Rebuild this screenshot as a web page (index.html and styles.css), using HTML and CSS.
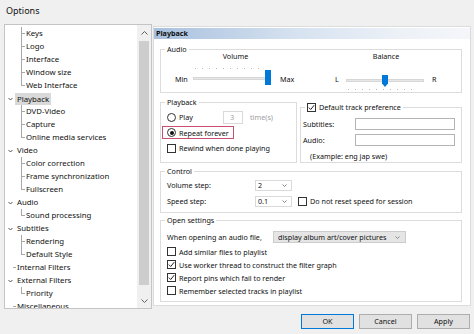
FILE: index.html
```html
<!DOCTYPE html>
<html lang="en">
<head>
    <meta charset="UTF-8">
    <title>Options</title>
    <link rel="stylesheet" href="styles.css">
</head>
<body>

<div class="title">Options</div>

<div class="main">
    <div class="tree">
        <div class="tree-list">
            <div class="branch">
                <div class="leaf">Keys</div>
                <div class="leaf">Logo</div>
                <div class="leaf">Interface</div>
                <div class="leaf">Window size</div>
                <div class="leaf">Web Interface</div>
            </div>
            <div class="node selected"><svg class="chev" width="5" height="4" viewBox="0 0 5 4"><path d="M0.5 1 L2.5 3 L4.5 1"/></svg><span>Playback</span></div>
            <div class="branch">
                <div class="leaf">DVD-Video</div>
                <div class="leaf">Capture</div>
                <div class="leaf">Online media services</div>
            </div>
            <div class="node"><svg class="chev" width="5" height="4" viewBox="0 0 5 4"><path d="M0.5 1 L2.5 3 L4.5 1"/></svg><span>Video</span></div>
            <div class="branch">
                <div class="leaf">Color correction</div>
                <div class="leaf">Frame synchronization</div>
                <div class="leaf">Fullscreen</div>
            </div>
            <div class="node"><svg class="chev" width="5" height="4" viewBox="0 0 5 4"><path d="M0.5 1 L2.5 3 L4.5 1"/></svg><span>Audio</span></div>
            <div class="branch">
                <div class="leaf">Sound processing</div>
            </div>
            <div class="node"><svg class="chev" width="5" height="4" viewBox="0 0 5 4"><path d="M0.5 1 L2.5 3 L4.5 1"/></svg><span>Subtitles</span></div>
            <div class="branch">
                <div class="leaf">Rendering</div>
                <div class="leaf">Default Style</div>
            </div>
            <div class="node root-leaf"><span>Internal Filters</span></div>
            <div class="node"><svg class="chev" width="5" height="4" viewBox="0 0 5 4"><path d="M0.5 1 L2.5 3 L4.5 1"/></svg><span>External Filters</span></div>
            <div class="branch">
                <div class="leaf">Priority</div>
            </div>
            <div class="node root-leaf"><span>Miscellaneous</span></div>
        </div>
        <div class="scrollbar">
            <div class="sb-arrow"><svg width="7" height="4" viewBox="0 0 7 4"><path d="M0.5 3.5 L3.5 0.5 L6.5 3.5"/></svg></div>
            <div class="sb-thumb"></div>
            <div class="sb-space"></div>
            <div class="sb-arrow"><svg width="7" height="4" viewBox="0 0 7 4"><path d="M0.5 0.5 L3.5 3.5 L6.5 0.5"/></svg></div>
        </div>
    </div>

    <div class="panel">
        <div class="panel-head">Playback</div>

        <div class="group audio">
            <div class="group-title">Audio</div>
            <div class="sliders">
                <div class="slider-block">
                    <div class="slider-caption">Volume</div>
                    <div class="slider-row">
                        <span class="side min">Min</span>
                        <div class="track">
                            <div class="ticks ticks-top"></div>
                            <div class="rail rail-vol"></div>
                            <div class="thumb thumb-vol"></div>
                        </div>
                        <span class="side max">Max</span>
                    </div>
                </div>
                <div class="slider-block">
                    <div class="slider-caption">Balance</div>
                    <div class="slider-row">
                        <span class="side left">L</span>
                        <div class="track">
                            <div class="rail rail-bal"></div>
                            <div class="ticks ticks-bottom"></div>
                            <div class="thumb thumb-bal"></div>
                        </div>
                        <span class="side right">R</span>
                    </div>
                </div>
            </div>
        </div>

        <div class="pair">
            <div class="group playback">
                <div class="group-title">Playback</div>
                <div class="opt-row play-row">
                    <span class="play-opt"><span class="radio"></span>Play</span>
                    <span class="spin">3</span>
                    <span class="muted">time(s)</span>
                </div>
                <div class="opt-row repeat-row">
                    <span class="radio on"></span>Repeat forever
                </div>
                <div class="opt-row rewind-row">
                    <span class="check"></span>Rewind when done playing
                </div>
            </div>
            <div class="group tracks">
                <div class="group-title"><span class="check"><svg width="7" height="7" viewBox="0 0 7 7"><path d="M0.8 3.6 L2.7 5.5 L6.2 1.2"/></svg></span>Default track preference</div>
                <div class="field-row">
                    <span class="field-label">Subtitles:</span>
                    <span class="textbox"></span>
                </div>
                <div class="field-row">
                    <span class="field-label">Audio:</span>
                    <span class="textbox"></span>
                </div>
                <div class="example">(Example: eng jap swe)</div>
            </div>
        </div>

        <div class="group control">
            <div class="group-title">Control</div>
            <div class="ctl-row">
                <span class="ctl-label">Volume step:</span>
                <span class="combo">2<svg width="5" height="3" viewBox="0 0 5 3"><path d="M0.5 0.5 L2.5 2.5 L4.5 0.5"/></svg></span>
            </div>
            <div class="ctl-row second">
                <span class="ctl-label">Speed step:</span>
                <span class="combo">0.1<svg width="5" height="3" viewBox="0 0 5 3"><path d="M0.5 0.5 L2.5 2.5 L4.5 0.5"/></svg></span>
                <span class="ctl-check"><span class="check"></span>Do not reset speed for session</span>
            </div>
        </div>

        <div class="group open">
            <div class="group-title">Open settings</div>
            <div class="open-row">
                <span class="open-label">When opening an audio file,</span>
                <span class="combo wide">display album art/cover pictures<svg width="5" height="3" viewBox="0 0 5 3"><path d="M0.5 0.5 L2.5 2.5 L4.5 0.5"/></svg></span>
            </div>
            <div class="check-row"><span class="check"></span>Add similar files to playlist</div>
            <div class="check-row"><span class="check"><svg width="7" height="7" viewBox="0 0 7 7"><path d="M0.8 3.6 L2.7 5.5 L6.2 1.2"/></svg></span>Use worker thread to construct the filter graph</div>
            <div class="check-row"><span class="check"><svg width="7" height="7" viewBox="0 0 7 7"><path d="M0.8 3.6 L2.7 5.5 L6.2 1.2"/></svg></span>Report pins which fail to render</div>
            <div class="check-row"><span class="check"></span>Remember selected tracks in playlist</div>
        </div>
    </div>
</div>

<div class="buttons">
    <div class="btn default">OK</div>
    <div class="btn">Cancel</div>
    <div class="btn">Apply</div>
</div>

</body>
</html>
```

FILE: styles.css
```css
* {
    box-sizing: border-box;
}
body {
    margin: 0;
    width: 474px;
    height: 334px;
    overflow: hidden;
    background: #f0f0f0;
    font-family: "Noto Sans", "Open Sans", sans-serif;
    font-size: 7.2px;
    color: #111;
}
.title {
    height: 24px;
    line-height: 22px;
    padding-left: 6px;
    font-size: 9px;
}
.main {
    display: flex;
    height: 285px;
    padding-left: 4px;
}

/* tree */
.tree {
    width: 148px;
    height: 285px;
    display: flex;
    background: #fff;
    border: 1px solid #c4c4c4;
    font-size: 7.8px;
}
.tree-list {
    flex: 1;
    overflow: hidden;
    padding-top: 2px;
}
.leaf, .node {
    position: relative;
    height: 13px;
    line-height: 13px;
    white-space: nowrap;
}
.leaf {
    padding-left: 21px;
}
.leaf::before {
    content: "";
    position: absolute;
    left: 16px;
    top: 0;
    bottom: 0;
    border-left: 1px solid #a8a8a8;
}
.leaf:last-child::before {
    bottom: 6px;
}
.leaf::after {
    content: "";
    position: absolute;
    left: 16px;
    top: 6px;
    width: 4px;
    border-top: 1px solid #a8a8a8;
}
.node {
    display: flex;
    align-items: center;
    padding-left: 3px;
}
.chev {
    margin-right: 4px;
    fill: none;
    stroke: #555;
    stroke-width: 1;
}
.root-leaf {
    padding-left: 12px;
}
.root-leaf::after {
    content: "";
    position: absolute;
    left: 8px;
    top: 6px;
    width: 3px;
    border-top: 1px solid #a8a8a8;
}
.selected span {
    background: #d9d9d9;
    padding: 0 2px;
    margin-left: -2px;
    line-height: 12px;
}
.scrollbar {
    width: 14px;
    background: #f0f0f0;
    display: flex;
    flex-direction: column;
    align-items: center;
}
.sb-arrow {
    width: 100%;
    height: 15px;
    display: flex;
    align-items: center;
    justify-content: center;
}
.sb-arrow svg {
    fill: none;
    stroke: #606060;
}
.sb-thumb {
    width: 10px;
    height: 244px;
    margin-top: 1px;
    background: #cdcdcd;
}
.sb-space {
    flex: 1;
}

/* right panel */
.panel {
    width: 318px;
    height: 280px;
    margin: 2px 0 0 1px;
    padding-top: 1px;
    background: #fff;
    border: 1px solid #dcdcdc;
}
.panel-head {
    height: 11px;
    line-height: 11px;
    padding-left: 2px;
    font-weight: bold;
    background: linear-gradient(to right, #a8c0de, #d6e2f0 45%, #eef2f8 80%, #f4f6fa);
}
.group {
    border: 1px solid #dcdcdc;
    margin: 0 8px 0 6px;
    padding: 0 6px;
}
.group-title {
    width: fit-content;
    margin: -7px 0 0 -2px;
    padding: 0 2px;
    background: #fff;
    line-height: 13px;
}

/* audio sliders */
.audio {
    margin-top: 10px;
    padding-bottom: 5px;
}
.sliders {
    display: flex;
    gap: 39px;
    margin: -6px 0 0 8px;
}
.slider-block {
    display: flex;
    flex-direction: column;
    align-items: center;
}
.slider-caption {
    line-height: 13px;
}
.slider-row {
    display: flex;
    align-items: center;
    height: 20px;
    margin-top: 4px;
}
.side {
    padding-top: 3px;
}
.min {
    width: 18px;
}
.max {
    margin-left: 9px;
    width: 16px;
}
.left {
    width: 11px;
}
.right {
    margin-left: 8px;
    width: 5px;
}
.track {
    position: relative;
    width: 78px;
    height: 20px;
}
.rail {
    position: absolute;
    left: 0;
    right: 0;
    height: 3px;
    background: #e7e7e7;
    border: 1px solid #d6d6d6;
}
.rail-vol {
    top: 10px;
}
.rail-bal {
    top: 12px;
}
.ticks {
    position: absolute;
    left: 2px;
    right: 7px;
    height: 1px;
    background: repeating-linear-gradient(to right, #b8b8b8 0 1px, transparent 1px 7px);
}
.ticks-top {
    top: 1px;
}
.ticks-bottom {
    top: 22px;
}
.thumb {
    position: absolute;
    width: 6px;
    background: #0078d7;
}
.thumb-vol {
    left: 72px;
    top: 3px;
    height: 15px;
}
.thumb-bal {
    left: 36px;
    top: 8px;
    height: 12px;
    clip-path: polygon(0 0, 100% 0, 100% 70%, 50% 100%, 0 70%);
}

/* playback + tracks */
.pair {
    display: flex;
    gap: 3px;
    margin: 9px 8px 0 6px;
}
.pair .group {
    margin: 0;
}
.playback {
    width: 137px;
    padding-bottom: 7px;
}
.tracks {
    flex: 1;
    margin-top: 5px !important;
    padding: 0 6px 0 2px;
}
.tracks .group-title {
    display: flex;
    align-items: center;
    margin-left: 2px;
}
.opt-row {
    display: flex;
    align-items: center;
    height: 14px;
}
.play-row {
    margin-top: 1px;
}
.repeat-row {
    width: fit-content;
    height: 13px;
    margin: 2px 0 0 -5px;
    padding: 0 4px;
    border: 1px solid #c8506e;
}
.rewind-row {
    margin-top: 2px;
}
.play-opt {
    width: 56px;
    display: flex;
    align-items: center;
}
.radio {
    width: 9px;
    height: 9px;
    margin-right: 3px;
    border: 1px solid #333;
    border-radius: 50%;
    background: #fff;
    display: flex;
    align-items: center;
    justify-content: center;
}
.radio.on::after {
    content: "";
    width: 4px;
    height: 4px;
    border-radius: 50%;
    background: #111;
}
.check {
    width: 9px;
    height: 9px;
    margin-right: 3px;
    border: 1px solid #333;
    background: #fff;
    display: flex;
    align-items: center;
    justify-content: center;
    flex: none;
}
.check svg {
    fill: none;
    stroke: #222;
    stroke-width: 1;
}
.spin {
    width: 20px;
    height: 13px;
    line-height: 11px;
    padding-left: 6px;
    border: 1px solid #d9d9d9;
    color: #a0a0a0;
}
.muted {
    margin-left: 7px;
    color: #a0a0a0;
}
.field-row {
    display: flex;
    align-items: center;
    height: 13px;
    margin-top: 3px;
}
.field-label {
    width: 52px;
}
.textbox {
    width: 100px;
    height: 12px;
    border: 1px solid #b4b4b4;
    background: #fff;
}
.example {
    padding-left: 7px;
    margin-top: 4px;
    line-height: 12px;
}

/* control */
.control {
    margin-top: 8px;
    padding-bottom: 5px;
}
.ctl-row {
    display: flex;
    align-items: center;
    height: 12px;
    margin-top: 1px;
}
.ctl-row.second {
    margin-top: 4px;
}
.ctl-label {
    width: 88px;
}
.combo {
    width: 37px;
    height: 11px;
    padding: 0 4px 0 2px;
    border: 1px solid #d9d9d9;
    background: #fff;
    display: flex;
    align-items: center;
    justify-content: space-between;
}
.combo svg {
    fill: none;
    stroke: #888;
}
.ctl-check {
    display: flex;
    align-items: center;
    margin-left: 6px;
}

/* open settings */
.open {
    margin-top: 7px;
    padding-bottom: 4px;
}
.open-row {
    display: flex;
    align-items: center;
    height: 12px;
    margin: 4px 0 2px;
}
.open-label {
    width: 106px;
}
.combo.wide {
    width: 133px;
    height: 12px;
    padding: 0 5px 0 4px;
    background: #e5e5e5;
    border-color: #cccccc;
}
.check-row {
    display: flex;
    align-items: center;
    height: 13px;
}

/* dialog buttons */
.buttons {
    display: flex;
    justify-content: flex-end;
    gap: 5px;
    margin-top: 5px;
    padding-right: 4px;
}
.btn {
    width: 53px;
    height: 15px;
    line-height: 13px;
    text-align: center;
    background: #e1e1e1;
    border: 1px solid #adadad;
}
.btn.default {
    border-color: #0078d7;
}
```
